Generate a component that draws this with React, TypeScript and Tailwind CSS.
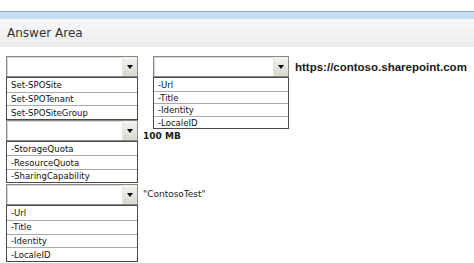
import type { ReactNode } from 'react'

const tahoma = { fontFamily: 'Tahoma, "DejaVu Sans Condensed", "Liberation Sans", sans-serif' }

function Dropdown({ width }: { width: number }) {
  return (
    <div
      className="flex h-[21px] border border-[#8c8a86] bg-white shadow-[inset_1px_1px_0_#d8d6d2]"
      style={{ width }}
    >
      <div className="flex-1" />
      <div className="flex w-[15px] items-center justify-center bg-gradient-to-b from-[#f4f3ef] to-[#d9d7d0] border-l border-[#e6e4de]">
        <span className="block h-0 w-0 border-x-[3.5px] border-t-[4px] border-x-transparent border-t-black" />
      </div>
    </div>
  )
}

function Options({ items, width, rowH }: { items: string[]; width: number; rowH: number }) {
  return (
    <div className="border border-[#4a4a4a] bg-white" style={{ width }}>
      {items.map((it, i) => (
        <div
          key={it}
          className={`flex items-center px-[4px] text-[9.5px] leading-none text-[#111] ${
            i > 0 ? 'border-t border-[#a9a9a9]' : ''
          }`}
          style={{ ...tahoma, height: rowH }}
        >
          {it}
        </div>
      ))}
    </div>
  )
}

function Label({ children, className = '' }: { children: ReactNode; className?: string }) {
  return (
    <span
      className={`text-[9px] text-[#1a1a1a] ${className}`}
      style={{ fontFamily: '"DejaVu Sans", Verdana, sans-serif' }}
    >
      {children}
    </span>
  )
}

const params = ['-Url', '-Title', '-Identity', '-LocaleID']

export default function App() {
  return (
    <div className="h-[263px] w-[474px] overflow-hidden bg-white">
      <div className="h-[11px]" />
      <div className="h-[8px] border-t border-[#8aa6cc] bg-[#c9dcf1]" />
      <div className="flex h-[28px] items-center bg-gradient-to-b from-[#f8f8f8] to-[#ececec] px-[7px]">
        <span className="text-[12px] text-[#333]" style={{ fontFamily: 'Verdana, "DejaVu Sans", sans-serif' }}>
          Answer Area
        </span>
      </div>

      <div className="flex flex-col pl-[6px] pt-[9px]">
        <div className="flex h-[64px] items-start">
          <div className="flex flex-col">
            <Dropdown width={132} />
            <Options items={['Set-SPOSite', 'Set-SPOTenant', 'Set-SPOSiteGroup']} width={132} rowH={13.5} />
          </div>
          <div className="ml-[15px] flex flex-col">
            <Dropdown width={136} />
            <Options items={params} width={136} rowH={12.5} />
          </div>
          <span
            className="ml-[6px] mt-[3px] text-[11.5px] font-bold text-[#1a1a1a]"
            style={{ fontFamily: '"Liberation Sans", Arial, sans-serif' }}
          >
            https://contoso.sharepoint.com
          </span>
        </div>

        <div className="flex h-[64px] items-start">
          <div className="flex flex-col">
            <Dropdown width={132} />
            <Options items={['-StorageQuota', '-ResourceQuota', '-SharingCapability']} width={132} rowH={13.3} />
          </div>
          <Label className="ml-[5px] mt-[10px] font-bold">100 MB</Label>
        </div>

        <div className="flex items-start">
          <div className="flex flex-col">
            <Dropdown width={132} />
            <Options items={params} width={132} rowH={13.8} />
          </div>
          <Label className="ml-[5px] mt-[4px]">"ContosoTest"</Label>
        </div>
      </div>
    </div>
  )
}
